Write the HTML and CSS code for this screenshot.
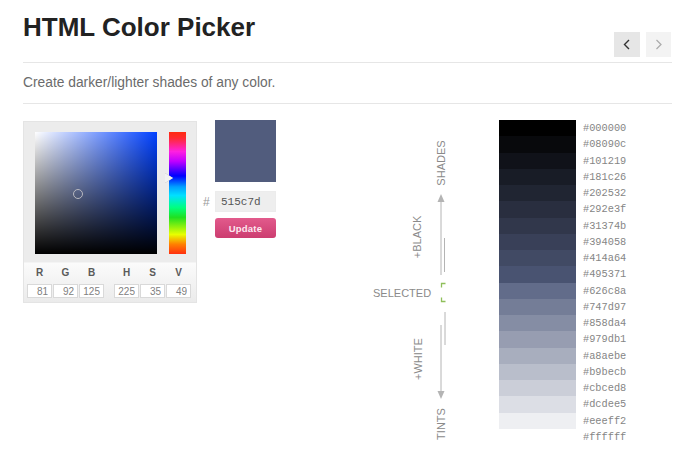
FILE: index.html
```html
<!DOCTYPE html>
<html lang="en">
<head>
<meta charset="utf-8">
<title>HTML Color Picker</title>
<link rel="stylesheet" href="styles.css">
</head>
<body>
<div class="page">
  <header class="header">
    <h1 class="title">HTML Color Picker</h1>
    <nav class="pager">
      <a class="pg pg-prev" href="#" aria-label="Previous">
        <svg width="26" height="25" viewBox="0 0 26 25"><polyline points="15,8 10.5,12.5 15,17" fill="none" stroke="#333" stroke-width="1.4"/></svg>
      </a>
      <a class="pg pg-next" href="#" aria-label="Next">
        <svg width="25" height="25" viewBox="0 0 25 25"><polyline points="10.5,8 15,12.5 10.5,17" fill="none" stroke="#aaa" stroke-width="1.2"/></svg>
      </a>
    </nav>
  </header>
  <p class="lead">Create darker/lighter shades of any color.</p>

  <main class="tool">
    <div class="picker">
      <div class="pick-top">
        <div class="sv"><span class="sv-dot"></span></div>
        <div class="hue"><span class="hue-arrow"></span></div>
      </div>
      <div class="fields">
        <div class="fgroup">
          <label class="field"><span class="flabel">R</span><input class="fin" value="81"></label>
          <label class="field"><span class="flabel">G</span><input class="fin" value="92"></label>
          <label class="field"><span class="flabel">B</span><input class="fin" value="125"></label>
        </div>
        <div class="fgroup">
          <label class="field"><span class="flabel">H</span><input class="fin" value="225"></label>
          <label class="field"><span class="flabel">S</span><input class="fin" value="35"></label>
          <label class="field"><span class="flabel">V</span><input class="fin" value="49"></label>
        </div>
      </div>
    </div>

    <div class="current">
      <div class="swatch"></div>
      <div class="hexrow"><span class="hash">#</span><input class="hex" value="515c7d"></div>
      <button class="update">Update</button>
    </div>

    <div class="diagram">
      <svg class="arrows" width="90" height="330" viewBox="0 0 90 330">
        <line x1="81" y1="80" x2="81" y2="155" stroke="#b4b4b4" stroke-width="1"/>
        <polygon points="81,74 77.5,82 84.5,82" fill="#b4b4b4"/>
        <line x1="84.5" y1="118" x2="84.5" y2="152" stroke="#b4b4b4" stroke-width="1"/>
        <path d="M85.5 163.5 H81.5 V167.5" fill="none" stroke="#8fbf5a" stroke-width="1.3"/>
        <path d="M81.5 177.5 V181.5 H85.5" fill="none" stroke="#8fbf5a" stroke-width="1.3"/>
        <line x1="85" y1="192" x2="85" y2="225" stroke="#b4b4b4" stroke-width="1"/>
        <line x1="81" y1="205" x2="81" y2="272" stroke="#b4b4b4" stroke-width="1"/>
        <polygon points="81,279 77.5,271 84.5,271" fill="#b4b4b4"/>
      </svg>
      <span class="dlabel d-shades">SHADES</span>
      <span class="dlabel d-black">+BLACK</span>
      <span class="dlabel d-selected">SELECTED</span>
      <span class="dlabel d-white">+WHITE</span>
      <span class="dlabel d-tints">TINTS</span>
    </div>

    <ul class="shades">
      <li class="shade"><span class="chip" style="background:#000000"></span><code class="code">#000000</code></li>
      <li class="shade"><span class="chip" style="background:#08090c"></span><code class="code">#08090c</code></li>
      <li class="shade"><span class="chip" style="background:#101219"></span><code class="code">#101219</code></li>
      <li class="shade"><span class="chip" style="background:#181c26"></span><code class="code">#181c26</code></li>
      <li class="shade"><span class="chip" style="background:#202532"></span><code class="code">#202532</code></li>
      <li class="shade"><span class="chip" style="background:#292e3f"></span><code class="code">#292e3f</code></li>
      <li class="shade"><span class="chip" style="background:#31374b"></span><code class="code">#31374b</code></li>
      <li class="shade"><span class="chip" style="background:#394058"></span><code class="code">#394058</code></li>
      <li class="shade"><span class="chip" style="background:#414a64"></span><code class="code">#414a64</code></li>
      <li class="shade"><span class="chip" style="background:#495371"></span><code class="code">#495371</code></li>
      <li class="shade"><span class="chip" style="background:#626c8a"></span><code class="code">#626c8a</code></li>
      <li class="shade"><span class="chip" style="background:#747d97"></span><code class="code">#747d97</code></li>
      <li class="shade"><span class="chip" style="background:#858da4"></span><code class="code">#858da4</code></li>
      <li class="shade"><span class="chip" style="background:#979db1"></span><code class="code">#979db1</code></li>
      <li class="shade"><span class="chip" style="background:#a8aebe"></span><code class="code">#a8aebe</code></li>
      <li class="shade"><span class="chip" style="background:#b9becb"></span><code class="code">#b9becb</code></li>
      <li class="shade"><span class="chip" style="background:#cbced8"></span><code class="code">#cbced8</code></li>
      <li class="shade"><span class="chip" style="background:#dcdee5"></span><code class="code">#dcdee5</code></li>
      <li class="shade"><span class="chip" style="background:#eeeff2"></span><code class="code">#eeeff2</code></li>
      <li class="shade"><span class="chip" style="background:#ffffff"></span><code class="code">#ffffff</code></li>
    </ul>
  </main>
</div>
</body>
</html>
```

FILE: styles.css
```css
html, body {
  margin: 0;
  padding: 0;
  background: #fff;
}
body {
  font-family: "Liberation Sans", Arial, sans-serif;
  color: #222;
}
.page {
  width: 649px;
  padding-left: 23px;
}

/* header */
.header {
  box-sizing: border-box;
  height: 63px;
  padding: 12px 0 5px;
  display: flex;
  justify-content: space-between;
  border-bottom: 1px solid #e6e6e6;
}
.title {
  margin: 0;
  font-size: 26px;
  line-height: 30px;
  font-weight: 700;
  color: #222;
  align-self: flex-start;
}
.pager {
  display: flex;
  gap: 6px;
  align-self: flex-end;
  margin-right: 1px;
}
.pg {
  display: block;
  height: 25px;
}
.pg svg { display: block; }
.pg-prev { width: 26px; background: #e6e6e6; }
.pg-next { width: 25px; background: #f3f3f3; }

.lead {
  margin: 0;
  padding: 10px 0;
  font-size: 13.8px;
  line-height: 20px;
  color: #6b6b6b;
  border-bottom: 1px solid #e6e6e6;
}

/* tool area */
.tool {
  display: flex;
  align-items: flex-start;
  padding-top: 16px;
}

.picker {
  box-sizing: border-box;
  width: 174px;
  margin-top: 1px;
  background: #ececec;
  border: 1px solid #e4e4e4;
}
.pick-top {
  display: flex;
  padding: 10px 10px 8px 11px;
}
.sv {
  position: relative;
  width: 122px;
  height: 122px;
  background:
    linear-gradient(to top, #000 0%, rgba(0,0,0,0) 100%),
    linear-gradient(to right, #fff 0%, rgba(255,255,255,0) 100%),
    #0040ff;
}
.sv-dot {
  position: absolute;
  left: 38px;
  top: 57px;
  width: 8px;
  height: 8px;
  border: 1px solid #b8b8c0;
  border-radius: 50%;
}
.hue {
  position: relative;
  width: 17px;
  height: 122px;
  margin-left: 12px;
  background: linear-gradient(to bottom,
    #ff2a10 0%, #ff2a30 5%, #ff20e0 16%, #c000ff 24%, #0000ff 36%, #00a0ff 45%, #00e0ff 52%, #00ff80 62%, #20e020 70%, #e8ff00 84%, #ff8000 92%, #ff3010 100%);
}
.hue-arrow {
  position: absolute;
  left: -4px;
  top: 41px;
  width: 0;
  height: 0;
  border-top: 5px solid transparent;
  border-bottom: 5px solid transparent;
  border-left: 8px solid #f2f2f2;
  filter: drop-shadow(0 0 0.5px #999);
}

.fields {
  display: flex;
  gap: 10px;
  padding: 4px 0 4px 3px;
  background: linear-gradient(#fbfbfb, #ebebeb);
  border-top: 1px solid #f4f4f4;
}
.fgroup {
  display: flex;
  gap: 1px;
}
.field {
  display: flex;
  flex-direction: column;
  align-items: center;
  width: 25px;
}
.flabel {
  font-size: 10px;
  line-height: 12px;
  font-weight: 700;
  color: #5a5a5a;
  margin-bottom: 5px;
}
.fin {
  box-sizing: border-box;
  width: 25px;
  height: 14px;
  margin: 0;
  padding: 0 3px 0 0;
  border: 1px solid #d9d9d9;
  background: #fff;
  font-family: "Liberation Sans", Arial, sans-serif;
  font-size: 10px;
  color: #808080;
  text-align: right;
}

/* current colour */
.current {
  margin-left: 6px;
  width: 73px;
}
.swatch {
  width: 61px;
  height: 62px;
  margin-left: 12px;
  background: #515c7d;
}
.hexrow {
  display: flex;
  align-items: center;
  margin-top: 9px;
}
.hash {
  width: 12px;
  font-size: 12px;
  color: #999;
  font-family: "Liberation Sans", Arial, sans-serif;
}
.hex {
  box-sizing: border-box;
  width: 61px;
  height: 21px;
  margin: 0;
  padding: 0 0 0 5px;
  border: 1px solid #ececec;
  background: #eeeeee;
  font-family: "Liberation Mono", "Courier New", monospace;
  font-size: 11px;
  color: #555;
}
.update {
  display: block;
  box-sizing: border-box;
  width: 61px;
  height: 20px;
  margin: 6px 0 0 12px;
  padding: 0;
  border: 0;
  border-radius: 3px;
  background: linear-gradient(#e25a8c, #cc3d70);
  color: #fde9f1;
  font-family: "Liberation Sans", Arial, sans-serif;
  font-size: 9.5px;
  font-weight: 700;
  letter-spacing: 0.2px;
}

/* diagram */
.diagram {
  position: relative;
  width: 90px;
  height: 330px;
  margin-left: 84px;
}
.arrows {
  position: absolute;
  left: 0;
  top: 0;
}
.dlabel {
  position: absolute;
  font-size: 11px;
  line-height: 13px;
  color: #8a8a8a;
  white-space: nowrap;
  transform: translate(-50%, -50%) rotate(-90deg);
}
.d-shades { left: 81px; top: 42.5px; }
.d-black { left: 57px; top: 117px; }
.d-white { left: 58px; top: 239px; }
.d-tints { left: 81px; top: 304px; }
.d-selected {
  left: 13px;
  top: 173px;
  transform: translateY(-50%);
}

/* shades list */
.shades {
  list-style: none;
  margin: 0 0 0 49px;
  padding: 0;
}
.shade {
  display: flex;
  align-items: center;
  height: 16.25px;
}
.chip {
  width: 77px;
  height: 100%;
}
.code {
  margin-left: 7px;
  font-family: "Liberation Mono", "Courier New", monospace;
  font-size: 10.3px;
  color: #858585;
}
```
